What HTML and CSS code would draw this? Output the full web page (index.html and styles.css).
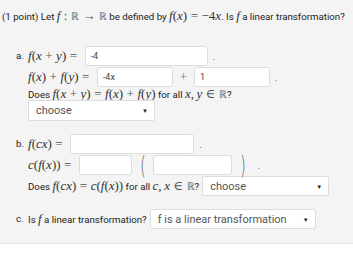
FILE: index.html
```html
<!DOCTYPE html>
<html lang="en">
<head>
    <meta charset="UTF-8">
    <title>Linear transformation</title>
    <link rel="stylesheet" href="styles.css">
</head>
<body>
    <div class="problem">
        <p class="intro">(1 point) Let&nbsp;<span class="m"><i>f</i><b class="op">:</b><span class="bb">ℝ</span><b class="op">→</b><span class="bb">ℝ</span></span>&nbsp;be defined by&nbsp;<span class="m"><i>f</i>(<i>x</i>)<b class="op">=</b>−4<i>x</i></span>. Is&nbsp;<i class="m">f</i>&nbsp;a linear transformation?</p>

        <div class="part part-a">
            <span class="marker">a.</span>
            <div class="part-body">
                <div class="row">
                    <span class="m lbl"><i>f</i>(<i>x</i><b class="op">+</b><i>y</i>)<b class="op">=</b></span>
                    <input class="ans w-a1" type="text" value="-4">
                    <span class="dot">.</span>
                </div>
                <div class="row">
                    <span class="m lbl"><i>f</i>(<i>x</i>)<b class="op">+</b><i>f</i>(<i>y</i>)<b class="op">=</b></span>
                    <input class="ans w-a2" type="text" value="-4x">
                    <span class="m plus">+</span>
                    <input class="ans w-a2" type="text" value="1">
                    <span class="dot">.</span>
                </div>
                <div class="row text-row">
                    Does&nbsp;<span class="m"><i>f</i>(<i>x</i><b class="op">+</b><i>y</i>)<b class="op">=</b><i>f</i>(<i>x</i>)<b class="op">+</b><i>f</i>(<i>y</i>)</span>&nbsp;for all&nbsp;<span class="m"><i>x</i>,&thinsp;<i>y</i><b class="op">∈</b><span class="bb">ℝ</span></span>?
                </div>
                <div class="select w-sel">choose<span class="caret">▼</span></div>
            </div>
        </div>

        <div class="part part-b">
            <span class="marker">b.</span>
            <div class="part-body">
                <div class="row">
                    <span class="m lbl"><i>f</i>(<i>cx</i>)<b class="op">=</b></span>
                    <input class="ans w-b1" type="text">
                    <span class="dot">.</span>
                </div>
                <div class="row">
                    <span class="m lbl"><i>c</i>(<i>f</i>(<i>x</i>))<b class="op">=</b></span>
                    <input class="ans w-b2" type="text">
                    <span class="paren">(</span>
                    <input class="ans w-b3" type="text">
                    <span class="paren">)</span><span class="dot">.</span>
                </div>
                <div class="row">
                    Does&nbsp;<span class="m"><i>f</i>(<i>cx</i>)<b class="op">=</b><i>c</i>(<i>f</i>(<i>x</i>))</span>&nbsp;for all&nbsp;<span class="m"><i>c</i>,&thinsp;<i>x</i><b class="op">∈</b><span class="bb">ℝ</span></span>?
                    <div class="select w-sel">choose<span class="caret">▼</span></div>
                </div>
            </div>
        </div>

        <div class="part part-c">
            <span class="marker">c.</span>
            <div class="part-body">
                <div class="row">
                    Is&nbsp;<i class="m">f</i>&nbsp;a linear transformation?
                    <div class="select w-c">f is a linear transformation<span class="caret">▼</span></div>
                </div>
            </div>
        </div>
    </div>
</body>
</html>
```

FILE: styles.css
```css
body {
    margin: 0;
    background: #fff;
    font-family: Roboto, "Liberation Sans", Arial, sans-serif;
    font-size: 9.7px;
    color: #222;
}
.problem {
    background: #f4f4f4;
    border-bottom: 1px solid #e2e2e2;
    height: 244px;
    box-sizing: border-box;
    padding: 9px 0 0 2px;
}
.intro {
    display: flex;
    align-items: center;
    height: 14px;
    margin: 0 0 23px 0;
    white-space: nowrap;
}
.m {
    font-family: "Liberation Serif", "DejaVu Serif", serif;
    font-size: 13px;
    color: #333;
}
.m i, i.m {
    font-style: italic;
}
.op {
    font-weight: normal;
    margin: 0 3.5px;
    color: #555;
}
.bb {
    font-family: "DejaVu Sans", sans-serif;
    font-size: 11px;
    font-weight: 300;
    color: #666;
}
.part {
    display: flex;
    padding-left: 14px;
}
.marker {
    width: 12px;
    line-height: 20px;
}
.part-body {
    display: flex;
    flex-direction: column;
}
.row {
    display: flex;
    align-items: center;
    height: 20px;
    margin-bottom: 1px;
    white-space: nowrap;
}
.text-row {
    height: 12px;
    margin-bottom: 0;
}
.lbl {
    margin-right: 4px;
}
.ans {
    height: 20px;
    box-sizing: border-box;
    border: 1px solid #ddd;
    border-radius: 3px;
    background: #fff;
    font-family: Roboto, "Liberation Sans", Arial, sans-serif;
    font-size: 9px;
    color: #444;
    padding: 0 5px;
    margin: 0;
}
.w-a1 { width: 123px; }
.w-a2 { width: 76px; }
.w-b1 { width: 124px; }
.w-b2 { width: 53px; }
.w-b3 { width: 79px; }
.dot {
    margin-left: 5px;
    color: #555;
}
.plus {
    width: 21px;
    text-align: center;
    color: #777;
}
.paren {
    font-family: "DejaVu Sans", sans-serif;
    font-size: 20px;
    font-weight: 200;
    color: #555;
    line-height: 20px;
    margin: 0 6px 0 7px;
    transform: scale(0.7, 1.25);
}
.select {
    display: flex;
    align-items: center;
    justify-content: space-between;
    height: 21px;
    box-sizing: border-box;
    border: 1px solid #ddd;
    border-radius: 2px;
    background: #fff;
    padding: 0 6px 0 7px;
    font-size: 11px;
    color: #555;
}
.caret {
    font-size: 6px;
    color: #222;
}
.w-sel { width: 127px; }
.w-c { width: 166px; }
.part-b { margin-top: 13px; }
.part-b .row .select { margin-left: 3px; height: 20px; }
.part-c { margin-top: 12px; }
.part-c .select { margin-left: 3px; height: 20px; }
```
